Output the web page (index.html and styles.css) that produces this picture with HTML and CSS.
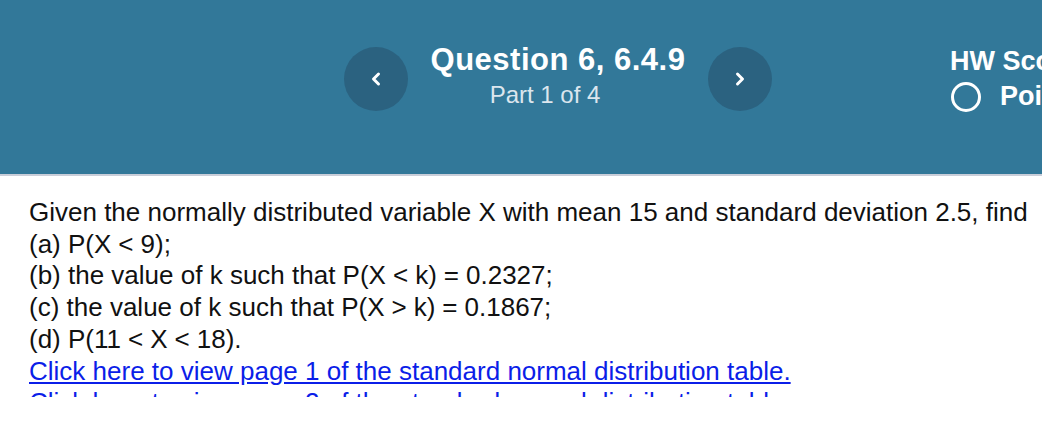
FILE: index.html
```html
<!DOCTYPE html>
<html>
<head>
<meta charset="utf-8">
<link rel="stylesheet" href="styles.css">
</head>
<body>
<div class="page">
  <header class="topbar">
    <div class="nav">
      <button class="circle-btn" aria-label="Previous question">
        <svg width="14" height="16" viewBox="0 0 14 16"><path d="M9.5 3 L4.5 8 L9.5 13" fill="none" stroke="#fff" stroke-width="3" stroke-linecap="round" stroke-linejoin="round"/></svg>
      </button>
      <div class="qtitle">
        <div class="qname">Question 6, 6.4.9</div>
        <div class="qpart">Part 1 of 4</div>
      </div>
      <button class="circle-btn" aria-label="Next question">
        <svg width="14" height="16" viewBox="0 0 14 16"><path d="M4.5 3 L9.5 8 L4.5 13" fill="none" stroke="#fff" stroke-width="3" stroke-linecap="round" stroke-linejoin="round"/></svg>
      </button>
    </div>
    <div class="score">
      <div class="score-title">HW Score: 0%, 0 of 20 points</div>
      <div class="score-row">
        <span class="ring"></span>
        <span class="score-pts">Points: 0 of 1</span>
      </div>
    </div>
  </header>
  <main class="question">
    <div class="qtext">
      <p>Given the normally distributed variable X with mean 15 and standard deviation 2.5, find</p>
      <p>(a) P(X<span class="op">&lt;</span>9);</p>
      <p>(b) the value of k such that P(X<span class="op">&lt;</span>k)<span class="op">=</span>0.2327;</p>
      <p>(c) the value of k such that P(X<span class="op">&gt;</span>k)<span class="op">=</span>0.1867;</p>
      <p>(d) P(11<span class="op">&lt;</span>X<span class="op">&lt;</span>18).</p>
      <p><a href="#">Click here to view page 1 of the standard normal distribution table.</a></p>
      <p><a href="#">Click here to view page 2 of the standard normal distribution table.</a></p>
    </div>
  </main>
</div>
</body>
</html>
```
FILE: styles.css
```css
* { box-sizing: border-box; }
html, body { margin: 0; padding: 0; background: #fff; }
body { font-family: "Liberation Sans", Arial, Helvetica, sans-serif; overflow: hidden; }
.page { width: 1042px; height: 424px; overflow: hidden; }

.topbar {
  height: 176px;
  background: #327899;
  border-bottom: 2px solid #c9ced9;
  display: flex;
  align-items: flex-start;
  padding-left: 344px;
  padding-top: 47px;
  white-space: nowrap;
  overflow: hidden;
}
.nav { display: flex; align-items: flex-start; }
.circle-btn {
  width: 64px; height: 64px;
  border-radius: 50%;
  border: none;
  background: #2b6280;
  display: flex; align-items: center; justify-content: center;
  padding: 0;
}
.qtitle {
  width: 300px;
  display: flex; flex-direction: column; align-items: center;
  color: #fff;
  margin-top: -5px;
}
.qname { font-size: 31px; font-weight: bold; line-height: 36px; letter-spacing: 0.5px; }
.qpart { font-size: 24px; color: #dce6ee; line-height: 28px; margin-top: 3px; margin-right: 26px; }

.score { margin-left: 178px; color: #fff; margin-top: -2px; }
.score-title { font-size: 27px; font-weight: bold; line-height: 32px; }
.score-row { display: flex; align-items: center; margin-top: 4px; }
.ring { width: 30px; height: 30px; border: 3px solid #fff; border-radius: 50%; margin-left: 1px; }
.score-pts { font-size: 27px; font-weight: bold; margin-left: 19px; }

.question { padding: 21px 0 0 29px; height: 221px; overflow: hidden; }
.qtext { font-size: 26px; color: #111; line-height: 31.7px; }
.qtext p { margin: 0; white-space: nowrap; }
.op { margin: 0 7px; }
.qtext a { color: #0b1ee8; text-decoration: underline; }
```
